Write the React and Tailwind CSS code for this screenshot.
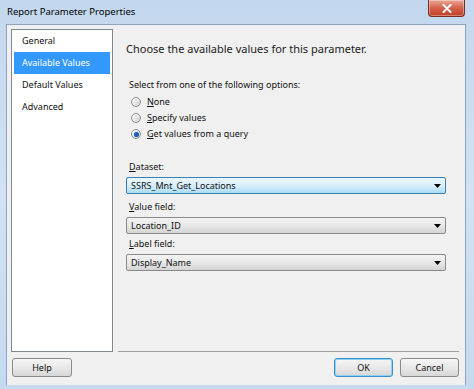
import React from "react";

const font = { fontFamily: '"Noto Sans", "Open Sans", sans-serif' };

function Radio({ checked, label, mn }) {
  return (
    <div className="flex h-[16px] items-center">
      <span className="ml-[4px] flex h-[10px] w-[10px] items-center justify-center rounded-full border border-[#8e8f8f] bg-gradient-to-br from-[#ffffff] to-[#d0d0d0]">
        {checked && <span className="h-[5px] w-[5px] rounded-full bg-[#1f5fb4] shadow-[0_0_1px_#6aa8e8]" />}
      </span>
      <span className="ml-[6px] text-[9px] leading-[14px] text-[#111]">
        <span className="underline">{mn}</span>
        {label}
      </span>
    </div>
  );
}

function Combo({ value, focused }) {
  return (
    <div
      className={
        "flex h-[17px] w-[320px] items-center justify-between rounded-[2px] border pl-[4px] pr-[4px] " +
        (focused
          ? "border-[#3c7fb1] bg-gradient-to-b from-[#eaf6fd] via-[#d9f0fc] to-[#a9dbf6]"
          : "border-[#8a8a8a] bg-gradient-to-b from-[#f4f4f4] via-[#e8e8e8] to-[#d4d4d4]")
      }
    >
      <span className="text-[9px] leading-[14px] text-[#111]">{value}</span>
      <svg width="7" height="4" viewBox="0 0 7 4">
        <path d="M0 0 L7 0 L3.5 4 Z" fill="#000" />
      </svg>
    </div>
  );
}

function Field({ mn, label, value, focused }) {
  return (
    <div className="flex flex-col">
      <div className="pl-[3px] text-[9px] leading-[14px] text-[#111]">
        <span className="underline">{mn}</span>
        {label}
      </div>
      <div className="mt-[3px]">
        <Combo value={value} focused={focused} />
      </div>
    </div>
  );
}

function Button({ children, def, w }) {
  return (
    <button
      className={
        "flex h-[19px] items-center justify-center rounded-[3px] border bg-gradient-to-b from-[#f6f6f6] via-[#e9e9e9] to-[#d7d7d7] text-[9px] leading-[14px] text-[#111] " +
        (def ? "border-[#3c8fc8] shadow-[inset_0_0_0_1px_#8fd0f5]" : "border-[#8a8a8a]") +
        " " +
        w
      }
    >
      {children}
    </button>
  );
}

export default function App() {
  return (
    <div
      className="relative flex h-[389px] w-[474px] flex-col overflow-hidden bg-gradient-to-b from-[#c3d7ee] via-[#d2e2f4] to-[#c5d9ef]"
      style={font}
    >
      {/* title bar */}
      <div className="flex h-[24px] shrink-0 items-start justify-between pl-[7px] pr-[9px]">
        <div className="pt-[5px] text-[9.5px] leading-[14px] text-[#000]">Report Parameter Properties</div>
        <div className="flex h-[17px] w-[37px] items-center justify-center rounded-b-[4px] border border-t-0 border-[#7b2b20] bg-gradient-to-b from-[#e9a797] via-[#d3614a] to-[#c13e28] shadow-[inset_0_0_0_1px_rgba(255,255,255,0.35)]">
          <svg width="10" height="9" viewBox="0 0 10 9">
            <path d="M1.5 1 L8.5 8 M8.5 1 L1.5 8" stroke="#fff" strokeWidth="2" strokeLinecap="round" />
          </svg>
        </div>
      </div>

      {/* body */}
      <div className="ml-[6px] mr-[8px] flex h-[361px] shrink-0 flex-col border border-b-0 border-[#8fa5be] bg-[#f0f0f0]">
        <div className="flex h-[327px] shrink-0 pl-[4px] pr-[6px] pt-[4px]">
          {/* nav */}
          <div className="flex w-[102px] shrink-0 flex-col border border-[#828790] bg-white p-[1px] pt-0 text-[9px] text-[#111]">
            <div className="flex h-[22px] items-center pl-[9px]">General</div>
            <div className="mx-[1px] flex h-[22px] items-center bg-[#3399ff] pl-[8px] text-white">Available Values</div>
            <div className="flex h-[22px] items-center pl-[9px]">Default Values</div>
            <div className="flex h-[22px] items-center pl-[9px]">Advanced</div>
          </div>

          {/* right panel */}
          <div className="ml-[5px] flex flex-1 flex-col border-b border-[#a0a0a0] pl-[8px]">
            <div className="mt-[11px] text-[11px] leading-[18px] text-[#222]">
              Choose the available values for this parameter.
            </div>
            <div className="mt-[20px] pl-[3px] text-[9px] leading-[14px] text-[#111]">
              Select from one of the following options:
            </div>
            <div className="mt-[2px] flex flex-col pl-[1px]">
              <Radio mn="N" label="one" />
              <Radio mn="S" label="pecify values" />
              <Radio mn="G" label="et values from a query" checked />
            </div>
            <div className="mt-[18px] flex flex-col">
              <Field mn="D" label="ataset:" value="SSRS_Mnt_Get_Locations" focused />
              <div className="mt-[6px]">
                <Field mn="V" label="alue field:" value="Location_ID" />
              </div>
              <div className="mt-[3px]">
                <Field mn="L" label="abel field:" value="Display_Name" />
              </div>
            </div>
          </div>
        </div>

        {/* buttons */}
        <div className="mt-[6px] flex items-center justify-between pl-[5px] pr-[6px]">
          <Button w="w-[60px]">Help</Button>
          <div className="flex gap-[7px]">
            <Button def w="w-[59px]">OK</Button>
            <Button w="w-[59px]">Cancel</Button>
          </div>
        </div>
      </div>
    </div>
  );
}
